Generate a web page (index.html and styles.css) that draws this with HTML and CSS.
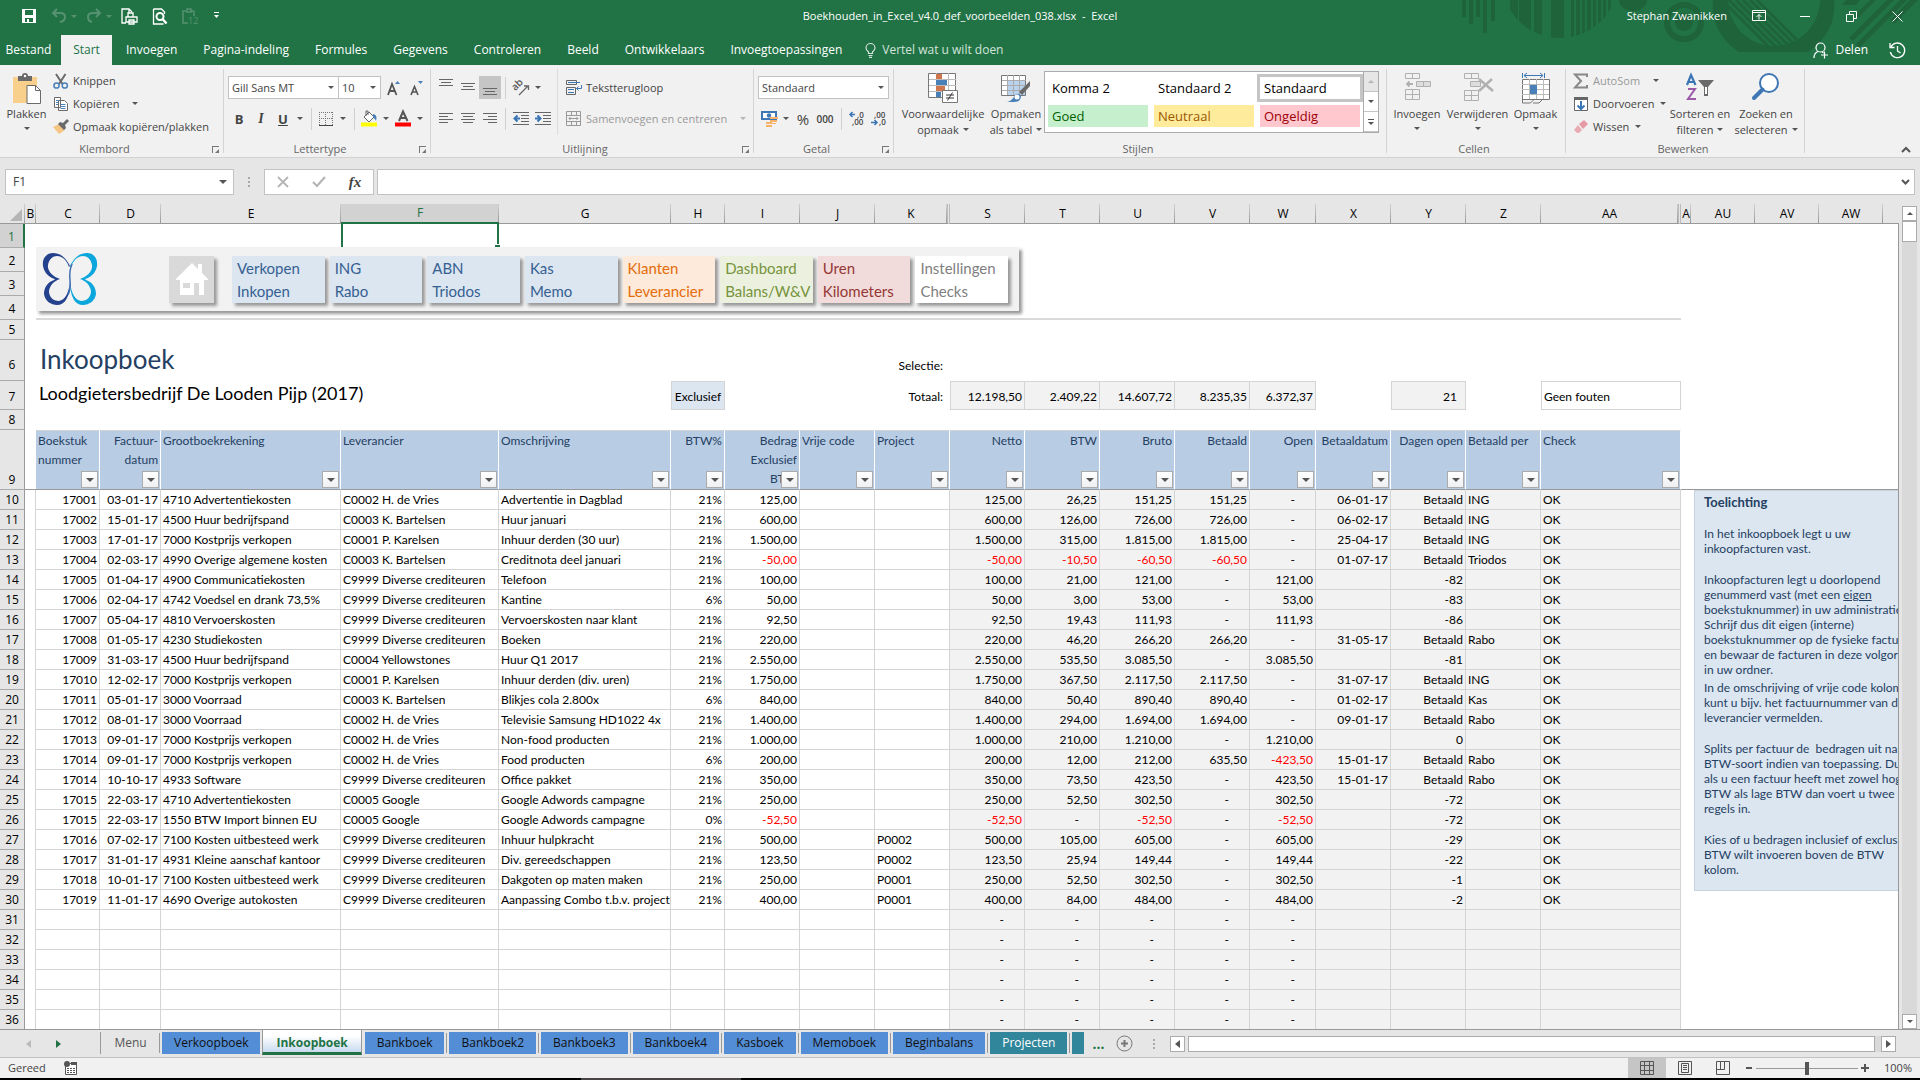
FILE: index.html
```html
<!DOCTYPE html>
<html lang="nl">
<head>
<meta charset="utf-8">
<title>Boekhouden_in_Excel_v4.0_def_voorbeelden_038.xlsx - Excel</title>
<link rel="stylesheet" href="styles.css">
</head>
<body>
<header class="top">
  <svg class="pattern" width="520" height="65" viewBox="0 0 520 65" aria-hidden="true">
    <defs>
      <clipPath id="disc"><circle cx="160" cy="-20" r="58"/></clipPath>
      <clipPath id="bowl"><circle cx="374" cy="0" r="48"/></clipPath>
    </defs>
    <g fill="#1e6339">
      <path d="M62 0h4v17h-4zM69 0h4v24h-4zM76 0h4v17h-4zM83 0h4v33h-4zM91 0h4v21h-4z"/>
      <g clip-path="url(#disc)"><path d="M110 0h8v40h-8zM119 0h12v40h-12zM134 0h8v40h-8zM151 0h13v40h-13zM171 0h3v40h-3zM176 0h4v40h-4zM182 0h3v40h-3zM187 0h4v40h-4zM193 0h3v40h-3zM198 0h3v40h-3zM203 0h3v40h-3zM208 0h3v40h-3z"/></g>
      <path d="M219 0h28a14 11 0 0 1-28 0z"/>
      <circle cx="284" cy="22" r="9"/>
      <path d="M313 0a61 56 0 0 0 26 52h69a61 56 0 0 0 26-52h-14a46 46 0 0 1-92 0z"/>
      <path d="M446 0h14l-4 5h-14zM456 14l14-14h6l-18 18zM449 38l38-38h7l-41 41zM456 44l44-44h7l-48 48zM490 20l20-20h8l-24 24z"/>
    </g>
    <circle cx="284" cy="22" r="17" fill="none" stroke="#1e6339" stroke-width="6"/>
    <g clip-path="url(#bowl)" stroke="#1e6339" stroke-width="3"><path d="M322 0l52 52M329 0l52 52M336 0l52 52M343 0l52 52M350 0l52 52M357 0l52 52"/></g>
  </svg>
  <div class="titlebar">
    <div class="quick">
      <button class="ic" aria-label="Opslaan"><svg width="16" height="16" viewBox="0 0 16 16"><path d="M1 1h14v14H1z" fill="#fff"/><path d="M4 2h8v5H4zM4 10h8v4H4z" fill="#217346"/><path d="M6 11h2v3H6z" fill="#fff"/></svg></button>
      <button class="ic dim" aria-label="Ongedaan maken"><svg width="16" height="16" viewBox="0 0 16 16" fill="none" stroke="#569272" stroke-width="2"><path d="M6 1L2 5l4 4M2 5h7q5 0 5 4t-5 5"/></svg><i class="arr pale"></i></button>
      <button class="ic dim" aria-label="Opnieuw"><svg width="16" height="16" viewBox="0 0 16 16" fill="none" stroke="#569272" stroke-width="2"><path d="M10 1l4 4-4 4M14 5H7q-5 0-5 4t4 5"/></svg><i class="arr pale"></i></button>
      <button class="ic" aria-label="Snel afdrukken"><svg width="17" height="17" viewBox="0 0 17 17" fill="none" stroke="#fff" stroke-width="1.3"><path d="M5 15H1V1h7l3 3M8 1v4"/><path d="M7 9V5h5v4M5 9h11v5H5zM8 12h5v4H8z"/></svg></button>
      <button class="ic" aria-label="Afdrukvoorbeeld"><svg width="16" height="17" viewBox="0 0 16 17" fill="none" stroke="#fff"><path d="M1.500 1h8l3 3v2M1.500 1v15h10" stroke-width="1.300"/><circle cx="8" cy="8.500" r="3.500" stroke-width="2"/><path d="M10.500 11l4 4.500" stroke-width="2.500"/></svg></button>
      <button class="ic" aria-label="Plakken waarden"><svg width="17" height="17" viewBox="0 0 17 17" fill="none" stroke="#569272" stroke-width="1.500"><path d="M6 15H1V3h3M12 3v5M5 1h4v3H5zM9 3h3"/><text x="6" y="16" font-family="Open Sans, sans-serif" font-size="9" fill="#569272" stroke="none">12</text></svg></button>
      <button class="ic" aria-label="Werkbalk aanpassen"><svg width="8" height="8" viewBox="0 0 8 8" fill="#fff"><path d="M1 0h5v1H1zM1 3h5L3.500 6z"/></svg></button>
    </div>
    <div class="doc">Boekhouden_in_Excel_v4.0_def_voorbeelden_038.xlsx &nbsp;-&nbsp; Excel</div>
    <div class="win">
      <span class="user">Stephan Zwanikken</span>
      <button aria-label="Lintweergave"><svg width="14" height="12" viewBox="0 0 14 12" fill="none" stroke="#fff"><path d="M.5.5h13v10H.5zM.5 2.500h13M7 9.500V4.500M4.500 7L7 4.500 9.500 7"/></svg></button>
      <button aria-label="Minimaliseren"><svg width="10" height="10" viewBox="0 0 10 10" stroke="#fff"><path d="M0 5.500h10"/></svg></button>
      <button aria-label="Verkleinen"><svg width="11" height="11" viewBox="0 0 11 11" fill="none" stroke="#fff"><path d="M.5 3.500h7v7h-7zM3.500 3V.5h7v7H8"/></svg></button>
      <button aria-label="Sluiten"><svg width="11" height="11" viewBox="0 0 11 11" stroke="#fff"><path d="M.5.5l10 10M10.500.5l-10 10"/></svg></button>
    </div>
  </div>
  <nav class="tabs">
    <button class="file">Bestand</button>
    <button class="on">Start</button>
    <button>Invoegen</button>
    <button>Pagina-indeling</button>
    <button>Formules</button>
    <button>Gegevens</button>
    <button>Controleren</button>
    <button>Beeld</button>
    <button>Ontwikkelaars</button>
    <button>Invoegtoepassingen</button>
    <button class="tell"><svg width="11" height="15" viewBox="0 0 11 15" fill="none" stroke="#d3e3da" stroke-width="1.200"><path d="M3.500 10.500V9Q1 7 1 5a4.500 4.500 0 0 1 9 0q0 2-2.500 4v1.500zM3.500 12.500h4M4 14.300h3"/></svg>Vertel wat u wilt doen</button>
    <span class="grow"></span>
    <button class="share"><svg width="16" height="17" viewBox="0 0 16 17" fill="none" stroke="#fff" stroke-width="1.200"><circle cx="7.500" cy="5.500" r="4.500"/><path d="M1 16q0-5 4-6.500M9 10l1.500 1M8 13h7M11.500 9.500v7"/></svg>Delen</button>
    <button class="hist" aria-label="Geschiedenis"><svg width="17" height="17" viewBox="0 0 17 17" fill="none" stroke="#fff" stroke-width="1.300"><path d="M1 1v4.500h4.500M1.800 5.200A7.300 7.300 0 1 1 1.300 10M8.500 4v5l3 2"/></svg></button>
  </nav>
</header>

<section class="ribbon" aria-label="Lint">
  <div class="group g-clip">
    <div class="body">
      <button class="big paste">
        <svg width="30" height="32" viewBox="0 0 30 32"><path d="M1 4h24v26H1z" fill="#f8cf8b"/><path d="M6 3h4q0-3 3-3t3 3h4v5H6z" fill="#6a6a6a"/><circle cx="13" cy="3" r="1.200" fill="#fff"/><path d="M15 12.500h8.500l5 5v13H15z" fill="#fff" stroke="#6a6a6a"/><path d="M23.500 12.500v5h5" fill="none" stroke="#6a6a6a"/></svg>
        <span>Plakken</span><i class="arr"></i></button>
      <div class="stack">
        <button class="row"><svg width="16" height="16" viewBox="0 0 16 16" fill="none"><path d="M3 1l6.500 10M12.500 1L6 11" stroke="#6a6a6a" stroke-width="2"/><circle cx="3.500" cy="12.500" r="2.600" stroke="#4a80b8" stroke-width="1.500"/><circle cx="11.800" cy="12.500" r="2.600" stroke="#4a80b8" stroke-width="1.500"/></svg>Knippen</button>
        <button class="row"><svg width="16" height="16" viewBox="0 0 16 16" fill="#fff" stroke="#6a6a6a"><path d="M1.500 1.500h6v10h-6zM5.500 4.500h6l3 3v7h-9z"/><path d="M3 4.500h3M3 6.500h2M3 8.500h2M7.500 8.500h5M7.500 10.500h5M7.500 12.500h5" stroke="#4a80b8"/></svg>Kopiëren<i class="arr gap"></i></button>
        <button class="row"><svg width="16" height="16" viewBox="0 0 16 16"><path d="M0 8l6-3 6 6-6 4z" fill="#f6c583"/><path d="M5 5l2-2 3 1 4-4 2 2-4 4 1 3-2 2z" fill="#6a6a6a"/></svg>Opmaak kopiëren/plakken</button>
      </div>
    </div>
    <div class="cap">Klembord<button class="launch" aria-label="Klembord openen"></button></div>
  </div>

  <div class="group g-font">
    <div class="body two">
      <div class="line">
        <select class="combo w-font" aria-label="Lettertype"><option>Gill Sans MT</option></select><select class="combo w-size" aria-label="Tekengrootte"><option>10</option></select>
        <button class="tool wide" aria-label="Tekst vergroten"><svg width="16" height="16" viewBox="0 0 16 16" fill="none" stroke="#555" stroke-width="1.800"><path d="M2 15L6 4l4.500 11M3.500 11h5"/><path d="M9 4l2.500-3L14 4z" fill="#4a80b8" stroke="none"/></svg></button>
        <button class="tool" aria-label="Tekst verkleinen"><svg width="16" height="16" viewBox="0 0 16 16" fill="none" stroke="#555" stroke-width="1.600"><path d="M3 15l3.500-8.500L10 15M4.500 12h4"/><path d="M10 1h5l-2.500 3z" fill="#4a80b8" stroke="none"/></svg></button>
      </div>
      <div class="line">
        <button class="tool b">B</button><button class="tool i">I</button><button class="tool u">U</button><i class="arr"></i><span class="vsep"></span>
        <button class="tool" aria-label="Randen"><svg width="14" height="14" viewBox="0 0 14 14" stroke="#777"><path d="M0 .5h14M0 6.500h14M.5 0v13M6.500 0v13M13.500 0v13" stroke-dasharray="1 1"/><path d="M0 13.500h14" stroke="#444"/></svg></button><i class="arr"></i><span class="vsep"></span>
        <button class="tool" aria-label="Opvulkleur"><svg width="17" height="17" viewBox="0 0 17 17"><path d="M3 7l5-5 5 5-5 5z" fill="#fff" stroke="#666"/><path d="M7 5V1h-2v5" fill="none" stroke="#666"/><path d="M12 4q5 1 3 7-1-3-3-3z" fill="#4a80b8"/><path d="M0 12.500h16v4H0z" fill="#ff0"/></svg></button><i class="arr"></i>
        <button class="tool" aria-label="Tekstkleur"><svg width="17" height="17" viewBox="0 0 17 17"><path d="M4 11l4-9.500L12.500 11M5.500 8h5" fill="none" stroke="#555" stroke-width="2"/><path d="M0 12.500h16v4H0z" fill="#f00"/></svg></button><i class="arr"></i>
      </div>
    </div>
    <div class="cap">Lettertype<button class="launch" aria-label="Lettertype openen"></button></div>
  </div>

  <div class="group g-align">
    <div class="body two">
      <div class="line">
        <button class="tool" aria-label="Boven uitlijnen"><svg width="14" height="23" viewBox="0 0 14 23" stroke="#666"><path d="M0 3.500h14M2 6.500h10M0 9.500h14"/></svg></button>
        <button class="tool" aria-label="Centreren"><svg width="14" height="23" viewBox="0 0 14 23" stroke="#666"><path d="M0 7.500h14M2 10.500h10M0 13.500h14"/></svg></button>
        <button class="tool sel" aria-label="Onder uitlijnen"><svg width="14" height="23" viewBox="0 0 14 23" stroke="#666"><path d="M0 12.500h14M2 15.500h10M0 18.500h14"/></svg></button>
        <span class="vsep near"></span>
        <button class="tool" aria-label="Afdrukstand"><svg width="17" height="17" viewBox="0 0 17 17"><text x="0" y="9" transform="rotate(-45 5 8)" font-family="Open Sans, sans-serif" font-weight="600" font-size="10" fill="#555">ab</text><path d="M6 16L15 7M11 7h4.500v4" fill="none" stroke="#666" stroke-width="1.300"/></svg></button><i class="arr"></i>
      </div>
      <div class="line">
        <button class="tool" aria-label="Links"><svg width="14" height="14" viewBox="0 0 14 14" stroke="#666"><path d="M0 1.500h14M0 4.500h9M0 7.500h14M0 10.500h9"/></svg></button>
        <button class="tool" aria-label="Midden"><svg width="14" height="14" viewBox="0 0 14 14" stroke="#666"><path d="M0 1.500h14M2 4.500h10M0 7.500h14M2 10.500h10"/></svg></button>
        <button class="tool" aria-label="Rechts"><svg width="14" height="14" viewBox="0 0 14 14" stroke="#666"><path d="M0 1.500h14M5 4.500h9M0 7.500h14M5 10.500h9"/></svg></button>
        <span class="vsep near"></span>
        <button class="tool" aria-label="Inspringing verkleinen"><svg width="16" height="14" viewBox="0 0 16 14" stroke="#666"><path d="M0 .5h16M8 3.500h8M8 6.500h8M8 9.500h8M0 12.500h16"/><path d="M7 6.500H2M4.500 3.500l-3 3 3 3" fill="none" stroke="#3a75b5" stroke-width="2"/></svg></button>
        <button class="tool" aria-label="Inspringing vergroten"><svg width="16" height="14" viewBox="0 0 16 14" stroke="#666"><path d="M0 .5h16M8 3.500h8M8 6.500h8M8 9.500h8M0 12.500h16"/><path d="M0 6.500h5M2.500 3.500l3 3-3 3" fill="none" stroke="#3a75b5" stroke-width="2"/></svg></button>
      </div>
    </div>
    <div class="body two wrapcol">
      <button class="row"><svg width="16" height="16" viewBox="0 0 16 16" fill="none" stroke="#666"><path d="M.5.5h10v4H.5zM.5 7.500h9v7h-9z"/><path d="M2 2.500h12M2 9.500h6M2 12.500h6M15.500 5v3.500h-5M12.500 6.500l-2 2 2 2" stroke="#3a75b5"/></svg>Tekstterugloop</button>
      <button class="row off"><svg width="16" height="16" viewBox="0 0 16 16" fill="none" stroke="#999"><path d="M.5.5h14v14H.5zM.5 4.500h14M.5 10.500h14M5.500.5v4M10.500.5v4M5.500 10.500v4M10.500 10.500v4M3 7.500h9M4.500 6L3 7.500 4.500 9M10.500 6L12 7.500 10.500 9"/></svg>Samenvoegen en centreren<i class="arr pale2 gap"></i></button>
    </div>
    <div class="cap">Uitlijning<button class="launch" aria-label="Uitlijning openen"></button></div>
  </div>

  <div class="group g-num">
    <div class="body two">
      <div class="line"><select class="combo w-num" aria-label="Getalnotatie"><option>Standaard</option></select></div>
      <div class="line">
        <button class="tool" aria-label="Valuta"><svg width="17" height="17" viewBox="0 0 17 17"><path d="M0 1h16v9H0z" fill="#3f77b4"/><path d="M2 3h12v5H2z" fill="#fff"/><circle cx="8" cy="5.500" r="2.200" fill="#3f77b4"/><path d="M9 7h8v2H9zM9 10h7v2H9zM5 12h6v2H5zM5 15h6v2H5zM9 13h6v1H9z" fill="#f6b26b"/></svg></button><i class="arr"></i>
        <button class="tool pct">%</button>
        <button class="tool ooo">000</button><span class="vsep"></span>
        <button class="tool" aria-label="Meer decimalen"><svg width="15" height="15" viewBox="0 0 15 15" font-family="Open Sans, sans-serif" font-size="8" font-weight="600" fill="#444"><path d="M6 3.500H1M3.500 1L1 3.500 3.500 6" fill="none" stroke="#3a75b5" stroke-width="1.500"/><text x="8" y="7">,0</text><text x="3" y="14">,00</text></svg></button>
        <button class="tool" aria-label="Minder decimalen"><svg width="15" height="15" viewBox="0 0 15 15" font-family="Open Sans, sans-serif" font-size="8" font-weight="600" fill="#444"><path d="M0 11.500h6M3.500 9L6 11.500 3.500 14" fill="none" stroke="#3a75b5" stroke-width="1.500"/><text x="3" y="7">,00</text><text x="8" y="14">,0</text></svg></button>
      </div>
    </div>
    <div class="cap">Getal<button class="launch" aria-label="Getal openen"></button></div>
  </div>

  <div class="group g-styles">
    <div class="body">
      <button class="big w-cond"><svg width="30" height="32" viewBox="0 0 30 32"><path d="M.5.5h27v24H.5z" fill="#fff" stroke="#777"/><path d="M1 6.500h27M1 12.500h27M1 18.500h27M8.500 0v24M20.500 0v24" stroke="#bbb"/><path d="M8 1h6v5H8zM8 13h9v5H8z" fill="#d0764c"/><path d="M8 7h11v5H8zM8 19h5v5H8z" fill="#4a80b8"/><path d="M14.500 17.500h15v12h-15z" fill="#fff" stroke="#777"/><path d="M18 22h8M18 25h8M24.500 19.500l-5 8" stroke="#333"/></svg><span>Voorwaardelijke</span><span>opmaak<i class="arr in"></i></span></button>
      <button class="big w-tab"><svg width="30" height="32" viewBox="0 0 30 32"><path d="M.5 2.500h24v20H.5z" fill="#fff" stroke="#777"/><path d="M7 7h17v15H7z" fill="#b9d3ee"/><path d="M1 7.500h24M1 12.500h24M1 17.500h24M6.500 2v20M12.500 2v20M18.500 2v20" stroke="#aaa"/><path d="M29 8v5l-8 9-3-3z" fill="#6a6a6a"/><path d="M6 29q5-1 8-7 4-3 6 1 0 6-7 6z" fill="#4a80b8"/><circle cx="16" cy="24" r="2.500" fill="#fff"/></svg><span>Opmaken</span><span>als tabel<i class="arr in"></i></span></button>
      <div class="gallery">
        <div class="styles">
          <button>Komma 2</button><button>Standaard 2</button><button class="cur">Standaard</button>
          <button class="good">Goed</button><button class="neut">Neutraal</button><button class="bad">Ongeldig</button>
        </div>
        <div class="gscroll"><button class="dis" aria-label="Omhoog"><i class="arr up pale2"></i></button><button aria-label="Omlaag"><i class="arr"></i></button><button class="more" aria-label="Meer"><i class="arr"></i></button></div>
      </div>
    </div>
    <div class="cap">Stijlen</div>
  </div>

  <div class="group g-cells">
    <div class="body">
      <button class="big w-c1"><svg width="30" height="32" viewBox="0 0 30 32" fill="none" stroke="#b0b0b0"><path d="M3.500.5h14v5h-14zM10.500.5v5M3.500 16.500h14v10h-14zM10.500 16v10M3.500 21.500h14"/><path d="M14.500 8.500h14v5h-14zM21.500 8v5" fill="#ddd"/><path d="M11 11H5M7.500 8.500L5 11l2.500 2.500" stroke-width="1.800"/></svg><span>Invoegen</span><i class="arr"></i></button>
      <button class="big w-c2"><svg width="30" height="32" viewBox="0 0 30 32" fill="none" stroke="#b0b0b0"><path d="M1.500.5h14v5h-14zM8.500.5v5M1.500 17.500h14v10h-14zM8.500 17v10M1.500 22.500h14"/><path d="M7.500 8.500h10v5h-10z" fill="#ddd"/><path d="M16 6l14 12M29 6L16 18" stroke-width="2.500"/></svg><span>Verwijderen</span><i class="arr"></i></button>
      <button class="big w-c3"><svg width="30" height="32" viewBox="0 0 30 32" fill="none" stroke="#777"><path d="M1.500 6.500h27v20h-27z" fill="#fff"/><path d="M1 11.500h27M1 16.500h27M1 21.500h27M8.500 6v20M15.500 6v20M22.500 6v20" stroke="#bbb"/><path d="M9 12h7v9H9z" fill="#4a80b8" stroke="none"/><path d="M1.500 26v4h8l3-3M12 30h6l3-3"/><path d="M1.500 0v5M23.500 0v5M3 2.500h19M6 0L3 2.500 6 5M19 0l3 2.500L19 5" stroke="#3a75b5"/></svg><span>Opmaak</span><i class="arr"></i></button>
    </div>
    <div class="cap">Cellen</div>
  </div>

  <div class="group g-edit">
    <div class="body">
      <div class="stack">
        <button class="row off"><svg width="16" height="16" viewBox="0 0 16 16"><path d="M14 4V1.500H2L8 8l-6 6.500h12V12" fill="none" stroke="#888" stroke-width="2"/></svg>AutoSom<i class="arr gap"></i></button>
        <button class="row"><svg width="16" height="16" viewBox="0 0 16 16"><path d="M1.500 1.500h13v13h-13z" fill="#fff" stroke="#666"/><path d="M1 1h14v3H1z" fill="#666"/><path d="M8 5v8M4.500 9.500L8 13l3.500-3.500" fill="none" stroke="#3a75b5" stroke-width="2"/></svg>Doorvoeren<i class="arr in"></i></button>
        <button class="row"><svg width="16" height="16" viewBox="0 0 16 16"><path d="M6 5l5-4 4 4-5 5z" fill="#e59aa5"/><path d="M5 6l4 5-3 3H4L1 11z" fill="#e9abb3"/></svg>Wissen<i class="arr in"></i></button>
      </div>
      <button class="big w-sort"><svg width="30" height="32" viewBox="0 0 30 32"><path d="M2 12L6 2l4.500 10M3.500 9h5.500" fill="none" stroke="#3a75b5" stroke-width="2.200"/><path d="M3 16h7L3 26h8" fill="none" stroke="#9b59a8" stroke-width="2"/><path d="M13 7h16l-6 7v9h-4v-9z" fill="#6a6a6a"/><path d="M20 14h2v7h-2z" fill="#fff"/></svg><span>Sorteren en</span><span>filteren<i class="arr in"></i></span></button>
      <button class="big w-find"><svg width="30" height="32" viewBox="0 0 30 32"><circle cx="18" cy="10" r="9" fill="#fff" stroke="#3f77b4" stroke-width="2"/><path d="M11.500 16.500L3 25" stroke="#3f77b4" stroke-width="4" stroke-linecap="round"/></svg><span>Zoeken en</span><span>selecteren<i class="arr in"></i></span></button>
    </div>
    <div class="cap">Bewerken</div>
  </div>
  <button class="fold" aria-label="Lint samenvouwen"><svg width="10" height="7" viewBox="0 0 10 7" fill="none" stroke="#555" stroke-width="2"><path d="M1 6l4-4 4 4"/></svg></button>
</section>

<section class="formula" aria-label="Formulebalk">
  <div class="namebox"><input aria-label="Naamvak" value="F1"><i class="arr big4"></i></div>
  <span class="dots"></span>
  <div class="fx">
    <button aria-label="Annuleren"><svg width="12" height="12" viewBox="0 0 12 12" stroke="#b5b5b5" stroke-width="1.800"><path d="M1 1l10 10M11 1L1 11"/></svg></button>
    <button aria-label="Invoeren"><svg width="14" height="12" viewBox="0 0 14 12" fill="none" stroke="#b5b5b5" stroke-width="2.200"><path d="M1 6l4 4 8-9"/></svg></button>
    <button class="fn">fx</button>
  </div>
  <div class="fbox"><input aria-label="Formule"><svg width="9" height="6" viewBox="0 0 9 6" fill="none" stroke="#555" stroke-width="2"><path d="M1 1l3.500 3.500L8 1"/></svg></div>
</section>

<main class="work">
  <div class="pane">
    <table class="sheet">
      <colgroup>
        <col class="c25"><col class="c11"><col class="c64"><col class="c61"><col class="c180"><col class="c158"><col class="c172"><col class="c54"><col class="c75"><col class="c75"><col class="c75"><col class="c75"><col class="c75"><col class="c75"><col class="c75"><col class="c66"><col class="c75"><col class="c75"><col class="c75"><col class="c140"><col class="c10"><col class="c64"><col class="c64"><col class="c64"><col>
      </colgroup>
      <thead>
        <tr><th class="corner"><svg width="12" height="12" viewBox="0 0 12 12"><path d="M12 0v12H0z" fill="#b5b5b5"/></svg></th><th>B</th><th>C</th><th>D</th><th>E</th><th class="cursel">F</th><th>G</th><th>H</th><th>I</th><th>J</th><th class="dbl">K</th><th>S</th><th>T</th><th>U</th><th>V</th><th>W</th><th>X</th><th>Y</th><th>Z</th><th class="dbl">AA</th><th>A</th><th>AU</th><th>AV</th><th>AW</th><th class="end"></th></tr>
      </thead>
      <tbody class="frozen">
        <tr class="h24"><th class="cursel">1</th><td colspan="4"></td><td class="active"></td><td colspan="19"></td></tr>
        <tr class="h24"><th>2</th><td colspan="24"></td></tr>
        <tr class="h24"><th>3</th><td colspan="24"></td></tr>
        <tr class="h24"><th>4</th><td></td><td colspan="18" class="rule"></td><td colspan="5"></td></tr>
        <tr class="h20"><th>5</th><td colspan="24"></td></tr>
        <tr class="h41"><th>6</th><td></td><td colspan="6" class="title">Inkoopboek</td><td colspan="3" class="lab">Selectie:</td><td colspan="14"></td></tr>
        <tr class="h29"><th>7</th><td></td><td colspan="5" class="sub">Loodgietersbedrijf De Looden Pijp (2017)</td><td class="box excl">Exclusief</td><td colspan="3" class="lab">Totaal:</td><td class="box tot">12.198,50</td><td class="box tot">2.409,22</td><td class="box tot">14.607,72</td><td class="box tot">8.235,35</td><td class="box tot">6.372,37</td><td></td><td class="box tot days">21</td><td></td><td class="box ok">Geen fouten</td><td colspan="5"></td></tr>
        <tr class="h20"><th>8</th><td colspan="24"></td></tr>
        <tr class="h60" id="heads"><th>9</th><td></td></tr>
      </tbody>
      <tbody id="rows"></tbody>
    </table>

    <nav class="banner">
      <svg class="logo" width="56" height="53" viewBox="0 0 56 53">
        <path fill="#23418c" d="M28 13C23 3 17 0 11 0 4 0 0 6 1 13c1 7 7 12 12 13l-1 1C6 29 2 34 2 41c1 7 7 11 13 11 8 0 13-8 13-24-1 12-5 19-11 20-6 0-10-4-10-10 1-6 5-10 11-12C11 24 5 18 6 12c1-6 5-9 9-9 6 0 10 5 12 11z"/>
        <path fill="#0aa6dc" d="M28 13C33 3 39 0 45 0c7 0 11 6 10 13-1 7-7 12-12 13l1 1c6 2 10 7 10 14-1 7-7 11-13 11-8 0-13-8-13-24 1 12 5 19 11 20 6 0 10-4 10-10-1-6-5-10-11-12 7-2 13-8 12-14-1-6-5-9-9-9-6 0-10 5-12 11z"/>
        <path d="M30 11Q27 18 28 27T26 42" fill="none" stroke="#3f6fb0" stroke-width="1.500"/>
      </svg>
      <a class="home" href="#menu" aria-label="Menu"><svg width="34" height="34" viewBox="0 0 34 34" fill="#fff"><path fill-rule="evenodd" d="M17 1l6 6V2h4v9l6 6v1H1v-1zM5 18h24v15h-5V21h-5v12H5zM8 21v5h7v-5z"/></svg></a>
      <div class="card blue"><a href="#verkopen">Verkopen</a><a href="#inkopen">Inkopen</a></div>
      <div class="card blue"><a href="#ing">ING</a><a href="#rabo">Rabo</a></div>
      <div class="card blue"><a href="#abn">ABN</a><a href="#triodos">Triodos</a></div>
      <div class="card blue"><a href="#kas">Kas</a><a href="#memo">Memo</a></div>
      <div class="card orange"><a href="#klanten">Klanten</a><a href="#leverancier">Leverancier</a></div>
      <div class="card green"><a href="#dashboard">Dashboard</a><a href="#balans">Balans/W&amp;V</a></div>
      <div class="card red"><a href="#uren">Uren</a><a href="#kilometers">Kilometers</a></div>
      <div class="card white"><a href="#instellingen">Instellingen</a><a href="#checks">Checks</a></div>
    </nav>

    <aside class="note">
      <h2>Toelichting</h2>
      <p>In het inkoopboek legt u uw<br>inkoopfacturen vast.</p>
      <p>Inkoopfacturen legt u doorlopend<br>genummerd vast (met een <u>eigen</u><br>boekstuknummer) in uw administratie.<br>Schrijf dus dit eigen (interne)<br>boekstuknummer op de fysieke factuur<br>en bewaar de facturen in deze volgorde<br>in uw ordner.</p>
      <p class="tight">In de omschrijving of vrije code kolom<br>kunt u bijv. het factuurnummer van de<br>leverancier vermelden.</p>
      <p>Splits per factuur de &nbsp;bedragen uit naar<br>BTW-soort indien van toepassing. Dus<br>als u een factuur heeft met zowel hoge<br>BTW als lage BTW dan voert u twee<br>regels in.</p>
      <p>Kies of u bedragen inclusief of exclusief<br>BTW wilt invoeren boven de BTW<br>kolom.</p>
    </aside>
  </div>
  <div class="vscroll"><button aria-label="Omhoog"><i class="arr up"></i></button><span class="thumb"></span><span class="grow"></span><button aria-label="Omlaag"><i class="arr"></i></button></div>
</main>

<footer class="sheets">
  <button class="nav off" aria-label="Vorige"><svg width="5" height="8" viewBox="0 0 5 8"><path d="M5 0v8L0 4z" fill="#bbb"/></svg></button>
  <button class="nav" aria-label="Volgende"><svg width="5" height="8" viewBox="0 0 5 8"><path d="M0 0v8l5-4z" fill="#217346"/></svg></button>
  <div class="stabs">
    <button class="plain">Menu</button><button>Verkoopboek</button><button class="on">Inkoopboek</button><button>Bankboek</button><button>Bankboek2</button><button>Bankboek3</button><button>Bankboek4</button><button>Kasboek</button><button>Memoboek</button><button>Beginbalans</button><button class="teal">Projecten</button><button class="teal stub" aria-label="Volgend blad"></button>
  </div>
  <button class="dotsb">...</button>
  <button class="plus" aria-label="Nieuw blad"><svg width="17" height="17" viewBox="0 0 17 17" fill="none" stroke="#777"><circle cx="8.500" cy="8.500" r="7.500"/><path d="M8.500 5v7M5 8.500h7" stroke-width="2"/></svg></button>
  <span class="dots"></span>
  <div class="hscroll"><button aria-label="Links"><svg width="5" height="8" viewBox="0 0 5 8"><path d="M5 0v8L0 4z" fill="#555"/></svg></button><span class="thumb"></span><button aria-label="Rechts"><svg width="5" height="8" viewBox="0 0 5 8"><path d="M0 0v8l5-4z" fill="#555"/></svg></button></div>
</footer>
<footer class="status">
  <span>Gereed</span>
  <button class="rec" aria-label="Macro opnemen"><svg width="14" height="14" viewBox="0 0 14 14"><path d="M1.500 4v9.500h11V2.500H6" fill="#fff" stroke="#555"/><path d="M7 1h6v3H7z" fill="#555"/><circle cx="3" cy="3" r="3" fill="#555"/><path d="M3 7.500h8M3 9.500h8M3 11.500h8" stroke="#555" stroke-dasharray="2 1"/></svg></button>
  <span class="grow"></span>
  <button class="view on" aria-label="Normaal"><svg width="14" height="14" viewBox="0 0 14 14" fill="none" stroke="#555"><path d="M.5.5h13v13H.5zM.5 4.500h13M.5 9.500h13M4.500.5v13M9.500.5v13"/></svg></button>
  <button class="view" aria-label="Pagina-indeling"><svg width="14" height="14" viewBox="0 0 14 14" fill="none" stroke="#555"><path d="M.5.5h13v13H.5zM3.500 2.500h7v9h-7zM5 4.500h4M5 6.500h4M5 8.500h4"/></svg></button>
  <button class="view" aria-label="Pagina-eindevoorbeeld"><svg width="14" height="14" viewBox="0 0 14 14" fill="none" stroke="#555"><path d="M.5.5h13v13H.5zM4.500 0v8.500M8.500 0v8.500h-8"/></svg></button>
  <button class="zoom" aria-label="Uitzoomen"><svg width="8" height="8" viewBox="0 0 8 8" stroke="#555" stroke-width="2"><path d="M1 4h6"/></svg></button>
  <input type="range" min="0" max="100" value="50" aria-label="Zoomniveau">
  <button class="zoom" aria-label="Inzoomen"><svg width="8" height="8" viewBox="0 0 8 8" stroke="#555" stroke-width="2"><path d="M0 4h8M4 0v8"/></svg></button>
  <span class="pctv">100%</span>
</footer>
<div class="edge"><span></span></div>
<script src="sheet.js"></script>
</body>
</html>
```
FILE: styles.css
```css
* { box-sizing: border-box; }
html, body { height: 100%; }
body {
  margin: 0;
  display: flex;
  flex-direction: column;
  overflow: hidden;
  background: #e6e6e6;
  color: #444;
  font: 12px/16px "Open Sans", "Noto Sans", sans-serif;
}
button, input, select { font: inherit; color: inherit; }
button { margin: 0; padding: 0; border: 0; background: none; white-space: nowrap; }
svg { display: block; flex: none; overflow: visible; }
.grow { flex: 1; }

.arr {
  display: block;
  flex: none;
  width: 0;
  height: 0;
  border: 3px solid transparent;
  border-top: 3px solid #555;
  border-bottom: 0;
}
.arr.up { border-top: 0; border-bottom: 3px solid #555; }
.arr.big4 { border-width: 4px 4px 0; }
.arr.pale { border-top-color: #569272; }
.arr.pale2 { border-top-color: #b5b5b5; border-bottom-color: #b5b5b5; }
.arr.in { display: inline-block; margin-left: 4px; vertical-align: 3px; }
.arr.gap { margin-left: 9px; }

/* title bar and ribbon tabs */
.top { position: relative; flex: none; background: #217346; color: #fff; }
.pattern { position: absolute; top: 0; right: 0; overflow: hidden; }
.titlebar { position: relative; display: grid; grid-template-columns: 1fr auto 1fr; align-items: center; height: 35px; padding-bottom: 3px; font-size: 11px; }
.quick { display: flex; align-items: center; padding-left: 21px; gap: 14px; }
.ic { display: flex; align-items: center; gap: 4px; height: 24px; }
.ic.dim { width: 21px; }
.win { display: flex; justify-content: flex-end; align-items: center; }
.win button { display: flex; justify-content: center; align-items: center; width: 46px; height: 30px; }
.user { margin-right: 9px; }
.tabs { position: relative; display: flex; height: 30px; }
.tabs button { padding: 0 13px; }
.tabs .file { width: 61px; padding: 0 4px 0 0; }
.tabs .on { width: 51px; margin-right: 1px; padding: 0; background: #f1f1f1; color: #217346; }
.tabs .tell { display: flex; align-items: center; gap: 6px; padding-left: 10px; color: #d3e3da; }
.tabs .share { display: flex; align-items: center; gap: 6px; padding: 0 9px; }
.tabs .hist { padding: 0 14px 0 12px; }

/* ribbon */
.ribbon { display: flex; flex: none; height: 93px; padding-top: 4px; background: #f1f1f1; border-bottom: 1px solid #d2d2d2; font-size: 11px; }
.group {
  display: grid;
  grid-template-columns: auto 1fr;
  grid-template-rows: 66px 18px;
  flex: none;
  height: 84px;
  border-right: 1px solid #d4d4d4;
}
.g-clip { width: 224px; }
.g-font { width: 207px; }
.g-align { width: 323px; }
.g-num { width: 140px; }
.g-styles { width: 493px; }
.g-cells { width: 179px; }
.g-edit { width: 239px; }
.body { display: flex; }
.body.two { flex-direction: column; gap: 8px; padding-top: 7px; }
.cap { display: flex; grid-column: 1 / -1; justify-content: center; position: relative; padding-right: 14px; color: #666; line-height: 28px; }
.g-styles .cap, .g-cells .cap, .g-edit .cap { padding-right: 4px; }
.launch { position: absolute; right: 4px; bottom: 0; width: 7px; height: 7px; border: 1px solid #777; border-right: 0; border-bottom: 0; }
.launch::after { content: ""; position: absolute; left: 2px; top: 2px; border: 2px solid #777; border-top-color: transparent; border-left-color: transparent; }
.big { display: flex; flex: none; flex-direction: column; align-items: center; justify-content: flex-start; padding-top: 4px; }
.big svg { margin-bottom: 1px; }
.big .arr { margin-top: 5px; }
.big .arr.in { margin-top: 0; }
.paste { width: 53px; }
.stack { display: flex; flex: none; flex-direction: column; }
.row { display: flex; flex: none; align-items: center; gap: 4px; height: 23px; }
.row .arr.in { margin-left: 2px; }
.off { color: #999; }
.line { display: flex; align-items: center; height: 23px; }
.g-font .body, .g-num .body, .g-align .body, .g-styles .body { padding-left: 4px; }
.g-align .wrapcol { margin-left: 3px; padding-left: 8px; border-left: 1px solid #dcdcdc; }
.combo {
  flex: none;
  height: 23px;
  padding: 0 3px;
  border: 1px solid #c2c2c2;
  border-radius: 0;
  appearance: none;
  background: #fff url("data:image/svg+xml,%3Csvg xmlns='http://www.w3.org/2000/svg' width='6' height='3'%3E%3Cpath d='M0 0h6L3 3z' fill='%23555'/%3E%3C/svg%3E") no-repeat right 4px center / 6px 3px;
}
.w-font { width: 111px; }
.w-size { width: 43px; margin-left: -1px; }
.w-num { width: 131px; }
.tool { display: flex; justify-content: center; align-items: center; flex: none; width: 22px; height: 23px; }
.tool.wide { margin-left: 2px; }
.tool.sel { background: #c5c5c5; }
.b, .i, .u { font-size: 13px; font-weight: 700; }
.i { font-style: italic; font-family: "Liberation Serif", serif; font-size: 14px; }
.u { text-decoration: underline; }
.pct { font-size: 15px; }
.ooo { font-size: 10px; font-weight: 600; }
.line .arr { margin: 0 3px; }
.vsep { width: 1px; height: 22px; margin: 0 3px 0 5px; background: #d0d0d0; }
.vsep.near { margin: 0 4px; }
.w-cond { width: 90px; }
.w-tab { width: 56px; }
.w-c1 { width: 60px; }
.w-c2 { width: 61px; }
.w-c3 { width: 55px; }
.g-edit .stack { width: 101px; padding-left: 7px; }
.w-sort { width: 66px; }
.w-find { width: 66px; }
.gallery { display: flex; flex: none; width: 335px; height: 62px; margin-top: 2px; background: #fff; border: 1px solid #ababab; }
.styles { display: grid; flex: 1; grid-template-columns: repeat(3, 100px); grid-template-rows: 28px 22px; gap: 3px 6px; padding: 2px 0 0 3px; color: #000; font-size: 13px; }
.styles button { text-align: left; padding-left: 4px; }
.styles .cur { margin-left: -3px; margin-right: -3px; padding-left: 4px; border: 3px solid #c5c5c5; }
.styles .good { background: #c6efce; color: #006100; }
.styles .neut { background: #ffeb9c; color: #9c5700; }
.styles .bad { background: #ffc7ce; color: #9c0006; }
.gscroll { display: grid; grid-template-rows: 1fr 1fr 1fr; width: 15px; border-left: 1px solid #ababab; }
.gscroll button { display: flex; flex-direction: column; gap: 2px; justify-content: center; align-items: center; border-bottom: 1px solid #c5c5c5; }
.gscroll .dis { background: #e6e6e6; }
.gscroll .more::before { content: ""; width: 6px; height: 1px; background: #555; }
.fold { margin: auto 9px 4px auto; }

/* formula bar */
.formula { display: flex; flex: none; align-items: center; height: 46px; padding: 10px 5px 9px; }
.namebox, .fx, .fbox { display: flex; align-items: center; height: 26px; background: #fff; border: 1px solid #c2c2c2; }
.namebox { width: 229px; padding-right: 6px; }
.formula input { flex: 1; min-width: 0; border: 0; padding: 0 7px; outline: 0; background: none; }
.dots { width: 2px; height: 10px; margin: 0 14px; background: repeating-linear-gradient(#aaa 0 2px, transparent 2px 4px); }
.fx { width: 110px; }
.fx button { display: flex; flex: 1; justify-content: center; }
.fx .fn { font: italic bold 15px/20px "Liberation Serif", serif; }
.fbox { flex: 1; margin-left: 3px; padding-right: 4px; }

/* worksheet */
.work { display: flex; flex: 1; min-height: 0; border-bottom: 1px solid #999; }
.pane { position: relative; flex: 1; min-width: 0; overflow: hidden; }
.sheet { width: 100%; table-layout: fixed; border-collapse: separate; border-spacing: 0; color: #000; font: 12px/19px Lato, "Open Sans", sans-serif; }
.c10 { width: 10px; } .c11 { width: 11px; } .c25 { width: 25px; } .c54 { width: 54px; } .c61 { width: 61px; }
.c64 { width: 64px; } .c66 { width: 66px; } .c75 { width: 75px; } .c140 { width: 140px; } .c158 { width: 158px; }
.c172 { width: 172px; } .c180 { width: 180px; }
.sheet th, .sheet td { padding: 0; overflow: hidden; white-space: nowrap; }
.sheet thead th {
  height: 20px;
  background: linear-gradient(#d0d0d0, #999) no-repeat right / 1px 100% #e6e6e6;
  border-bottom: 1px solid #999;
  font: 12px/18px "Open Sans", sans-serif;
}
.sheet thead .end { background: #e6e6e6; }
.sheet thead .dbl { border-right: 3px double #bbb; }
.sheet thead .corner svg { margin: 3px 0 0 10px; }
.sheet thead .cursel { background-color: #d2d2d2; border-bottom: 2px solid #217346; color: #217346; }
.sheet tbody th {
  background: #e6e6e6;
  border-right: 1px solid #999;
  border-bottom: 1px solid #ababab;
  font: 12px/18px "Open Sans", sans-serif;
  text-align: center;
  vertical-align: bottom;
}
.sheet tbody .cursel { background: #d2d2d2; border-right: 2px solid #217346; color: #217346; }
.sheet td { background: #fff; }
.sheet td:last-child { border-right: 1px solid #999; }
.h20 { height: 20px; } .h24 { height: 24px; } .h29 { height: 29px; } .h41 { height: 41px; } .h60 { height: 60px; }
.sheet .h24 th { line-height: 20px; }
.sheet .h29 th { line-height: 24px; }
.sheet .h41 th { line-height: 30px; }
.sheet .active { position: relative; border: 2px solid #217346; border-top: 0; border-bottom: 0; overflow: visible; }
.sheet .active::after { content: ""; position: absolute; right: -3px; bottom: 0; width: 5px; height: 3px; background: #217346; border-top: 1px solid #fff; }
.sheet .rule { border-bottom: 2px solid #d9d9d9; }
.sheet td.title { padding-left: 4px; font-size: 26px; line-height: 39px; vertical-align: top; color: #244062; }
.sheet td.sub { padding-left: 3px; font-size: 18px; line-height: 25px; vertical-align: top; }
.sheet td.lab { padding-right: 7px; text-align: right; vertical-align: bottom; line-height: 30px; }
.sheet .h29 td.lab { line-height: 26px; }
.sheet td.box { border: 1px solid #d4d4d4; border-left: 0; vertical-align: bottom; line-height: 24px; padding: 0 2px; }
.sheet td.excl { background: #dce6f1; border-left: 1px solid #d4d4d4; padding: 0 1px; text-align: center; }
.sheet td.tot { background: #f2f2f2; text-align: right; }
.sheet td.days { padding-right: 8px; border-left: 1px solid #d4d4d4; }
.sheet td.lab + .tot, .sheet td.ok { border-left: 1px solid #d4d4d4; }
.sheet #heads td { border-bottom: 1px solid #999; }
.sheet #heads .hd {
  position: relative;
  height: 60px;
  padding: 0 2px;
  background: #b8cce4;
  border-top: 1px solid #d4d4d4;
  border-right: 1px solid #fff;
  color: #244062;
  line-height: 19px;
  vertical-align: top;
  white-space: normal;
}
.hd span { display: block; height: 58px; overflow: hidden; }
.hd button, .vscroll button, .hscroll button { display: flex; justify-content: center; align-items: center; border: 1px solid #ababab; background: #fff; }
.hd button { position: absolute; right: 1px; bottom: 1px; width: 17px; height: 17px; background: linear-gradient(#fff, #eef0f3); }
.hd .arr { border-width: 4px 4px 0; }
.r { text-align: right; }
.sheet #rows td { height: 20px; padding: 0 2px; }
.sheet #rows .g { border-right: 1px solid #d4d4d4; border-bottom: 1px solid #d4d4d4; }
.sheet #rows td:nth-child(2) { border-right: 1px solid #d4d4d4; }
.sheet #rows .calc { background: #f2f2f2; }
.sheet #rows .neg { color: #f00; }
.sheet #rows .nil { padding-right: 20px; }

/* shapes that float over the cells */
.banner { position: absolute; left: 36px; top: 43px; display: flex; align-items: center; gap: 5px; width: 983px; height: 64px; padding: 0 11px 0 6px; background: #f2f2f2; box-shadow: 3px 3px 3px #999; font: 15px/23px Lato, sans-serif; }
.home { display: flex; justify-content: center; align-items: center; width: 45px; height: 47px; margin: 0 13px 0 66px; background: #d9d9d9; box-shadow: 3px 3px 3px #999; }
.card { display: flex; flex: 1; flex-direction: column; height: 47px; padding: 1px 0 0 5px; box-shadow: 3px 3px 3px #999; }
.card a { color: inherit; text-decoration: none; }
.blue { background: #dce6f1; color: #366092; }
.orange { background: #fdeada; color: #e46c0a; }
.green { background: #ebf1de; color: #77933c; }
.red { background: #f2dcdb; color: #953735; }
.white { background: #fff; color: #7f7f7f; }
.note { position: absolute; left: 1694px; top: 286px; right: 1px; overflow: hidden; padding: 3px 0 13px 9px; background: #dce6f1; border: 1px solid #c9d3de; border-right: 0; color: #244062; font: 12px/15px Lato, sans-serif; white-space: nowrap; }
.note h2 { margin: 0; font-size: 13px; line-height: 16px; }
.note p { margin: 16px 0 0; }
.note .tight { margin-top: 3px; }

.vscroll { display: flex; flex-direction: column; width: 21px; padding: 2px 3px 0; background: #e6e6e6; }
.vscroll button { width: 15px; height: 15px; }
.vscroll .thumb { height: 21px; border: 1px solid #ababab; background: #fff; }
.vscroll .grow { background: #d9d9d9; }

/* sheet tabs */
.sheets { display: flex; flex: none; align-items: center; height: 28px; border-bottom: 1px solid #c2c2c2; padding-right: 24px; }
.sheets .nav { width: 30px; display: flex; justify-content: center; }
.sheets .nav.off { margin-left: 13px; }
.stabs { display: flex; align-self: stretch; margin-left: 27px; }
.stabs button { height: 22px; margin: 2px 5px 0 0; padding: 0 12px; background: #538dd5; color: #111; position: relative; }
.stabs button::after { content: ""; position: absolute; right: -3px; top: 1px; width: 1px; height: 20px; background: #999; }
.stabs .plain { width: 60px; background: none; color: #555; border-left: 1px solid #999; margin-right: 2px; }
.stabs .plain::after { right: 0; }
.stabs .on { height: 25px; margin: 0 3px 0 -3px; padding: 3px 13px 0; background: linear-gradient(#fff 6px, #c9daee); border: 1px solid #999; border-top: 0; border-bottom: 3px solid #217346; color: #217346; font-weight: 700; }
.stabs .on::after { display: none; }
.stabs .teal { background: #31869b; color: #fff; }
.stabs .stub { width: 12px; padding: 0; margin-right: 8px; }
.stabs .stub::after { display: none; }
.dotsb { color: #217346; font-weight: 700; font-size: 14px; }
.plus { margin-left: 12px; }
.sheets .dots { margin: 0 15px 0 20px; }
.hscroll { display: flex; flex: 1; gap: 3px; height: 16px; background: linear-gradient(90deg, #e6e6e6, #d9d9d9); }
.hscroll button { width: 15px; }
.hscroll .thumb { flex: 1; margin-right: 3px; border: 1px solid #ababab; background: #fff; }

.status { display: flex; flex: none; align-items: center; height: 20px; padding: 0 8px; background: #f1f1f1; font-size: 11px; }
.rec { margin-left: 18px; }
.view { display: flex; justify-content: center; align-items: center; width: 38px; height: 20px; }
.view.on { background: #c5c5c5; }
.zoom { width: 14px; display: flex; justify-content: center; }
.status input { width: 102px; height: 14px; margin: 0; appearance: none; background: linear-gradient(#999, #999) no-repeat center / 100% 1px; }
.status input::-webkit-slider-thumb { appearance: none; width: 4px; height: 13px; background: #555; }
.pctv { width: 40px; text-align: right; }
.edge { display: grid; grid-template-columns: 581px 160px 1fr; flex: none; height: 2px; background: #000; }
.edge span { grid-column: 2; background: #484444; }
```
FILE: sheet.js
```js
const heads = [
  ["Boekstuk nummer", 0], ["Factuur- datum", 1], ["Grootboekrekening", 0], ["Leverancier", 0],
  ["Omschrijving", 0], ["BTW%", 1], ["Bedrag Exclusief BTW", 1], ["Vrije code", 0], ["Project", 0],
  ["Netto", 1], ["BTW", 1], ["Bruto", 1], ["Betaald", 1], ["Open", 1], ["Betaaldatum", 1],
  ["Dagen open", 1], ["Betaald per", 0], ["Check", 0],
];

// nummer|datum|rekening|leverancier|omschrijving|btw%|bedrag|code|project|netto|btw|bruto|betaald|open|betaaldatum|dagen|per
const data = `17001|03-01-17|4710 Advertentiekosten|C0002 H. de Vries|Advertentie in Dagblad|21%|125,00|||125,00|26,25|151,25|151,25|-|06-01-17|Betaald|ING
17002|15-01-17|4500 Huur bedrijfspand|C0003 K. Bartelsen|Huur januari|21%|600,00|||600,00|126,00|726,00|726,00|-|06-02-17|Betaald|ING
17003|17-01-17|7000 Kostprijs verkopen|C0001 P. Karelsen|Inhuur derden (30 uur)|21%|1.500,00|||1.500,00|315,00|1.815,00|1.815,00|-|25-04-17|Betaald|ING
17004|02-03-17|4990 Overige algemene kosten|C0003 K. Bartelsen|Creditnota deel januari|21%|-50,00|||-50,00|-10,50|-60,50|-60,50|-|01-07-17|Betaald|Triodos
17005|01-04-17|4900 Communicatiekosten|C9999 Diverse crediteuren|Telefoon|21%|100,00|||100,00|21,00|121,00|-|121,00||-82|
17006|02-04-17|4742 Voedsel en drank 73,5%|C9999 Diverse crediteuren|Kantine|6%|50,00|||50,00|3,00|53,00|-|53,00||-83|
17007|05-04-17|4810 Vervoerskosten|C9999 Diverse crediteuren|Vervoerskosten naar klant|21%|92,50|||92,50|19,43|111,93|-|111,93||-86|
17008|01-05-17|4230 Studiekosten|C9999 Diverse crediteuren|Boeken|21%|220,00|||220,00|46,20|266,20|266,20|-|31-05-17|Betaald|Rabo
17009|31-03-17|4500 Huur bedrijfspand|C0004 Yellowstones|Huur Q1 2017|21%|2.550,00|||2.550,00|535,50|3.085,50|-|3.085,50||-81|
17010|12-02-17|7000 Kostprijs verkopen|C0001 P. Karelsen|Inhuur derden (div. uren)|21%|1.750,00|||1.750,00|367,50|2.117,50|2.117,50|-|31-07-17|Betaald|ING
17011|05-01-17|3000 Voorraad|C0003 K. Bartelsen|Blikjes cola 2.800x|6%|840,00|||840,00|50,40|890,40|890,40|-|01-02-17|Betaald|Kas
17012|08-01-17|3000 Voorraad|C0002 H. de Vries|Televisie Samsung HD1022 4x|21%|1.400,00|||1.400,00|294,00|1.694,00|1.694,00|-|09-01-17|Betaald|Rabo
17013|09-01-17|7000 Kostprijs verkopen|C0002 H. de Vries|Non-food producten|21%|1.000,00|||1.000,00|210,00|1.210,00|-|1.210,00||0|
17014|09-01-17|7000 Kostprijs verkopen|C0002 H. de Vries|Food producten|6%|200,00|||200,00|12,00|212,00|635,50|-423,50|15-01-17|Betaald|Rabo
17014|10-10-17|4933 Software|C9999 Diverse crediteuren|Office pakket|21%|350,00|||350,00|73,50|423,50|-|423,50|15-01-17|Betaald|Rabo
17015|22-03-17|4710 Advertentiekosten|C0005 Google|Google Adwords campagne|21%|250,00|||250,00|52,50|302,50|-|302,50||-72|
17015|22-03-17|1550 BTW Import binnen EU|C0005 Google|Google Adwords campagne|0%|-52,50|||-52,50|-|-52,50|-|-52,50||-72|
17016|07-02-17|7100 Kosten uitbesteed werk|C9999 Diverse crediteuren|Inhuur hulpkracht|21%|500,00||P0002|500,00|105,00|605,00|-|605,00||-29|
17017|31-01-17|4931 Kleine aanschaf kantoor|C9999 Diverse crediteuren|Div. gereedschappen|21%|123,50||P0002|123,50|25,94|149,44|-|149,44||-22|
17018|10-01-17|7100 Kosten uitbesteed werk|C9999 Diverse crediteuren|Dakgoten op maten maken|21%|250,00||P0001|250,00|52,50|302,50|-|302,50||-1|
17019|11-01-17|4690 Overige autokosten|C9999 Diverse crediteuren|Aanpassing Combo t.b.v. project|21%|400,00||P0001|400,00|84,00|484,00|-|484,00||-2|`.split("\n").map((line) => [...line.split("|"), "OK"]);

const empty = ["", "", "", "", "", "", "", "", "", "-", "-", "-", "-", "-", "", "", "", ""];
while (data.length < 27) data.push(empty);

const rightAligned = new Set([0, 1, 5, 6, 9, 10, 11, 12, 13, 14, 15]);
const money = new Set([6, 9, 10, 11, 12, 13]);

document.getElementById("heads").insertAdjacentHTML("beforeend",
  heads.map(([name, right]) =>
    `<td class="hd${right ? " r" : ""}"><span>${name}</span><button aria-label="Filter ${name}"><i class="arr"></i></button></td>`
  ).join("") + '<td colspan="5"></td>');

document.getElementById("rows").innerHTML = data.map((row, n) => {
  const cells = row.map((value, i) => {
    const cls = ["g"];
    if (rightAligned.has(i)) cls.push("r");
    if (i > 8) cls.push("calc");
    if (money.has(i) && value === "-") cls.push("nil");
    else if (money.has(i) && value.startsWith("-")) cls.push("neg");
    return `<td class="${cls.join(" ")}">${value}</td>`;
  }).join("");
  return `<tr><th>${n + 10}</th><td></td>${cells}<td colspan="5"></td></tr>`;
}).join("");
```
